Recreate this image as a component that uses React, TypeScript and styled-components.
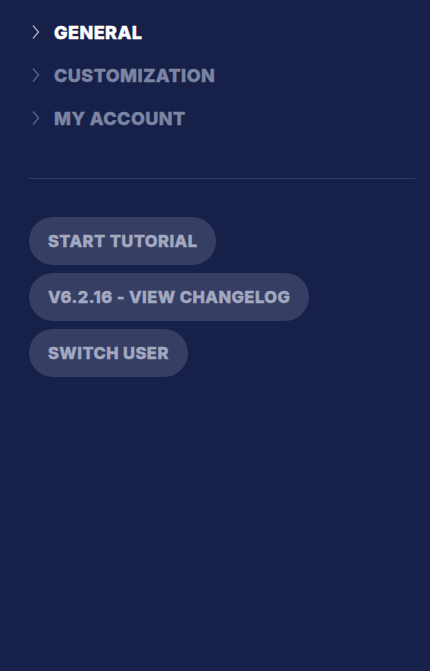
import styled, { createGlobalStyle } from 'styled-components';

const GlobalStyle = createGlobalStyle`
  html, body {
    margin: 0;
    padding: 0;
    background: #172048;
  }
  body {
    font-family: Inter, Lato, 'Noto Sans', sans-serif;
  }
`;

const Panel = styled.div`
  min-height: 671px;
  background: #172048;
  padding: 17px 15px 0 29px;
  box-sizing: border-box;
`;

const Menu = styled.ul`
  list-style: none;
  margin: 0;
  padding: 0;
  display: flex;
  flex-direction: column;
  gap: 13px;
`;

const MenuItem = styled.li<{ $active?: boolean }>`
  display: flex;
  align-items: center;
  gap: 13px;
  height: 30px;
  font-size: 18px;
  font-weight: 800;
  letter-spacing: 0.45px;
  -webkit-text-stroke: 0.4px currentColor;
  color: ${(p) => (p.$active ? '#ffffff' : '#7c84a3')};
  svg {
    color: ${(p) => (p.$active ? '#a9aec6' : '#5c6488')};
    flex-shrink: 0;
  }
`;

const Divider = styled.hr`
  border: none;
  height: 1px;
  background: #343c64;
  margin: 45px 0 38px;
`;

const Buttons = styled.div`
  display: flex;
  flex-direction: column;
  align-items: flex-start;
  gap: 8px;
`;

const PillButton = styled.button`
  height: 48px;
  padding: 0 19px;
  border: none;
  border-radius: 24px;
  background: #363e63;
  color: #a2a8c0;
  font-family: Inter, Lato, 'Noto Sans', sans-serif;
  font-size: 16.5px;
  font-weight: 800;
  letter-spacing: 0.45px;
  -webkit-text-stroke: 0.4px currentColor;
  cursor: pointer;
`;

const Chevron = () => (
  <svg width="12" height="16" viewBox="0 0 12 16" fill="none">
    <path d="M4 1.5 L9.5 8 L4 14.5" stroke="currentColor" strokeWidth="1.3" />
  </svg>
);

const items = [
  { label: 'GENERAL', active: true },
  { label: 'CUSTOMIZATION' },
  { label: 'MY ACCOUNT' },
];

const buttons = ['START TUTORIAL', 'V6.2.16 - VIEW CHANGELOG', 'SWITCH USER'];

const App = () => (
  <>
    <GlobalStyle />
    <Panel>
      <Menu>
        {items.map((item) => (
          <MenuItem key={item.label} $active={item.active}>
            <Chevron />
            {item.label}
          </MenuItem>
        ))}
      </Menu>
      <Divider />
      <Buttons>
        {buttons.map((b) => (
          <PillButton key={b}>{b}</PillButton>
        ))}
      </Buttons>
    </Panel>
  </>
);

export default App;
